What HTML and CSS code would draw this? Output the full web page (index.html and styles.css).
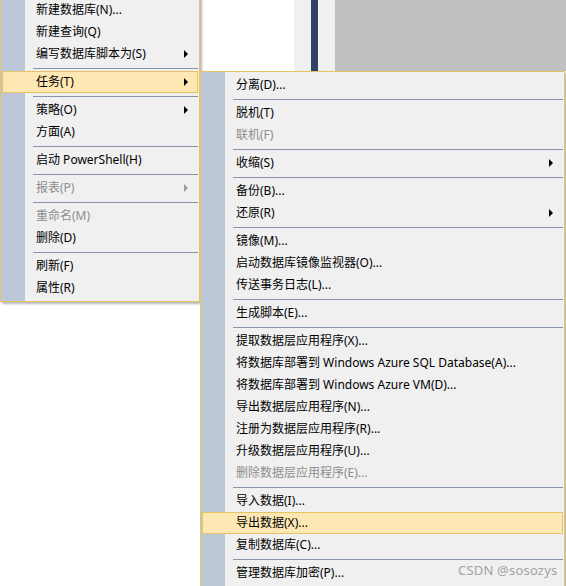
FILE: index.html
```html
<!DOCTYPE html>
<html lang="zh-CN">
<head>
<meta charset="utf-8">
<title>SSMS 任务菜单</title>
<link rel="stylesheet" href="styles.css">
</head>
<body>
<div class="screen">
  <div class="backdrop">
    <div class="bg-white"></div>
    <div class="bg-panel"></div>
    <div class="bg-split"></div>
    <div class="bg-panel"></div>
    <div class="bg-gray"></div>
  </div>

  <div class="menu menu-main">
    <div class="item"><span class="label">新建数据库(N)...</span></div>
    <div class="item"><span class="label">新建查询(Q)</span></div>
    <div class="item"><span class="label">编写数据库脚本为(S)</span><span class="arrow"></span></div>
    <div class="sep"></div>
    <div class="item active"><span class="label">任务(T)</span><span class="arrow"></span></div>
    <div class="sep"></div>
    <div class="item"><span class="label">策略(O)</span><span class="arrow"></span></div>
    <div class="item"><span class="label">方面(A)</span></div>
    <div class="sep"></div>
    <div class="item"><span class="label">启动 PowerShell(H)</span></div>
    <div class="sep"></div>
    <div class="item disabled"><span class="label">报表(P)</span><span class="arrow"></span></div>
    <div class="sep"></div>
    <div class="item disabled"><span class="label">重命名(M)</span></div>
    <div class="item"><span class="label">删除(D)</span></div>
    <div class="sep"></div>
    <div class="item"><span class="label">刷新(F)</span></div>
    <div class="item"><span class="label">属性(R)</span></div>
  </div>

  <div class="menu menu-sub">
    <div class="item"><span class="label">分离(D)...</span></div>
    <div class="sep"></div>
    <div class="item"><span class="label">脱机(T)</span></div>
    <div class="item disabled"><span class="label">联机(F)</span></div>
    <div class="sep"></div>
    <div class="item"><span class="label">收缩(S)</span><span class="arrow"></span></div>
    <div class="sep"></div>
    <div class="item"><span class="label">备份(B)...</span></div>
    <div class="item"><span class="label">还原(R)</span><span class="arrow"></span></div>
    <div class="sep"></div>
    <div class="item"><span class="label">镜像(M)...</span></div>
    <div class="item"><span class="label">启动数据库镜像监视器(O)...</span></div>
    <div class="item"><span class="label">传送事务日志(L)...</span></div>
    <div class="sep"></div>
    <div class="item"><span class="label">生成脚本(E)...</span></div>
    <div class="sep"></div>
    <div class="item"><span class="label">提取数据层应用程序(X)...</span></div>
    <div class="item"><span class="label">将数据库部署到 Windows Azure SQL Database(A)...</span></div>
    <div class="item"><span class="label">将数据库部署到 Windows Azure VM(D)...</span></div>
    <div class="item"><span class="label">导出数据层应用程序(N)...</span></div>
    <div class="item"><span class="label">注册为数据层应用程序(R)...</span></div>
    <div class="item"><span class="label">升级数据层应用程序(U)...</span></div>
    <div class="item disabled"><span class="label">删除数据层应用程序(E)...</span></div>
    <div class="sep"></div>
    <div class="item"><span class="label">导入数据(I)...</span></div>
    <div class="item active"><span class="label">导出数据(X)...</span></div>
    <div class="item"><span class="label">复制数据库(C)...</span></div>
    <div class="sep"></div>
    <div class="item"><span class="label">管理数据库加密(P)...</span></div>
  </div>

  <div class="watermark">CSDN @sosozys</div>
</div>
</body>
</html>
```

FILE: styles.css
```css
* { box-sizing: border-box; }

html, body {
  margin: 0;
  padding: 0;
  background: #ffffff;
}

.screen {
  position: relative;
  width: 566px;
  height: 586px;
  overflow: hidden;
  background: #ffffff;
  font-family: "Noto Sans", "Noto Sans CJK SC", sans-serif;
  font-size: 12px;
  color: #000000;
}

.backdrop {
  display: flex;
  height: 71px;
}
.bg-white { width: 294px; background: #ffffff; }
.bg-panel { width: 17px; background: #f0f0f0; }
.bg-split { width: 7px; background: #2f4164; }
.bg-gray { flex: 1; background: #c0c0c0; }

.menu {
  position: absolute;
  display: flex;
  flex-direction: column;
  padding: 2px 1px;
  border: 1px solid #e5c365;
  background: linear-gradient(to right, #bcc7d8 0, #bcc7d8 24px, #f0f0f0 24px);
  box-shadow: 2px 2px 2px rgba(0, 0, 0, 0.28);
}

.menu-main {
  left: 0;
  top: -4px;
  width: 200px;
}

.menu-sub {
  left: 200px;
  top: 71px;
  width: 365px;
}

.item {
  display: flex;
  align-items: center;
  height: 22px;
  line-height: 22px;
  padding: 0 9px 0 33px;
  border: 1px solid transparent;
  white-space: nowrap;
}

.item .label { flex: 1; }

.item.active {
  background: #fde8b4;
  border-color: #e5c365;
}

.item.disabled { color: #8d8d8d; }

.arrow {
  width: 0;
  height: 0;
  border-left: 4px solid #000000;
  border-top: 4px solid transparent;
  border-bottom: 4px solid transparent;
}
.item.disabled .arrow { border-left-color: #9a9a9a; }

.sep {
  height: 6px;
  margin-left: 31px;
  display: flex;
  align-items: center;
}
.sep::before {
  content: "";
  flex: 1;
  height: 1px;
  background: #8793a8;
}

.watermark {
  position: absolute;
  left: 458px;
  top: 561px;
  font-family: "Noto Sans", sans-serif;
  font-size: 13px;
  color: #a3a3a3;
  letter-spacing: 0.2px;
}
```
